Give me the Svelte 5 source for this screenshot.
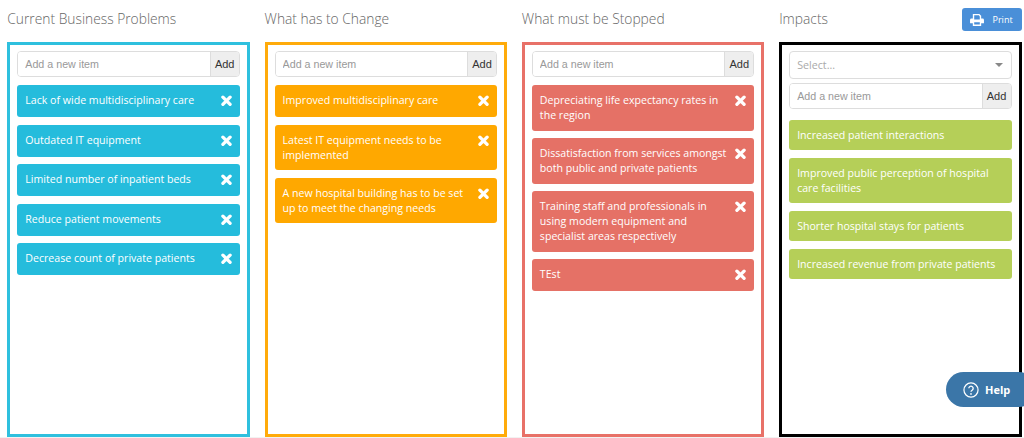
<script>
	const columns = [
		{
			title: 'Current Business Problems',
			tone: 'blue',
			items: [
				'Lack of wide multidisciplinary care',
				'Outdated IT equipment',
				'Limited number of inpatient beds',
				'Reduce patient movements',
				'Decrease count of private patients'
			]
		},
		{
			title: 'What has to Change',
			tone: 'orange',
			items: [
				'Improved multidisciplinary care',
				'Latest IT equipment needs to be implemented',
				'A new hospital building has to be set up to meet the changing needs'
			]
		},
		{
			title: 'What must be Stopped',
			tone: 'red',
			items: [
				'Depreciating life expectancy rates in the region',
				'Dissatisfaction from services amongst both public and private patients',
				'Training staff and professionals in using modern equipment and specialist areas respectively',
				'TEst'
			]
		},
		{
			title: 'Impacts',
			tone: 'green',
			select: true,
			print: true,
			items: [
				'Increased patient interactions',
				'Improved public perception of hospital care facilities',
				'Shorter hospital stays for patients',
				'Increased revenue from private patients'
			]
		}
	];
</script>

<div class="board">
	{#each columns as col}
		<section class="column {col.tone}">
			<header>
				<h2>{col.title}</h2>
				{#if col.print}
					<button class="print">
						<svg width="14" height="13" viewBox="0 0 15 14">
							<path fill="#fff" d="M3 1h7l2 2v3h1.500A1.500 1.500 0 0 1 15 7.500V11h-3v3H3v-3H0V7.500A1.500 1.500 0 0 1 1.500 6H3zM4.500 2.500V7h6V3.800L9.500 2.500zM4.500 10v2.500h6V10z"/>
						</svg>
						Print
					</button>
				{/if}
			</header>
			<div class="box">
				{#if col.select}
					<div class="select">
						<span>Select...</span>
						<i class="caret"></i>
					</div>
				{/if}
				<div class="add">
					<input type="text" placeholder="Add a new item" />
					<button>Add</button>
				</div>
				<ul>
					{#each col.items as item}
						<li>
							<span>{item}</span>
							{#if col.tone !== 'green'}
								<svg class="x" width="11" height="16.500" viewBox="0 -2.250 11 16.500">
									<path d="M1.900 1.900 L9.100 9.100 M9.100 1.900 L1.900 9.100" stroke="#fff" stroke-width="3.300" stroke-linecap="round"/>
								</svg>
							{/if}
						</li>
					{/each}
				</ul>
			</div>
		</section>
	{/each}
</div>

<button class="help">
	<svg width="16" height="16" viewBox="0 0 17 17">
		<circle cx="8.500" cy="8.500" r="7.500" fill="none" stroke="#fff" stroke-width="1.300"/>
		<path d="M6.200 6.700a2.300 2.300 0 1 1 3.500 2c-.8.500-1.200.9-1.200 1.700" fill="none" stroke="#fff" stroke-width="1.400"/>
		<circle cx="8.500" cy="12.700" r=".9" fill="#fff"/>
	</svg>
	Help
</button>

<style>
	:global(body) {
		background: #fff;
		font-family: 'Open Sans', sans-serif;
		overflow: hidden;
	}

	.board {
		display: grid;
		grid-template-columns: repeat(4, 242.400px);
		column-gap: 14.900px;
		padding: 0 0 0 7.300px;
		height: 438px;
		box-sizing: border-box;
		border-bottom: 1px solid #f2f2f2;
	}

	header {
		display: flex;
		justify-content: space-between;
		align-items: center;
		height: 42px;
		padding-bottom: 6px;
		box-sizing: border-box;
	}

	h2 {
		margin: 0;
		font-size: 13.800px;
		font-weight: 300;
		color: #666;
	}

	.print {
		display: flex;
		align-items: center;
		gap: 9px;
		height: 23px;
		width: 60px;
		margin-top: 2px;
		padding: 0 0 0 8px;
		border: none;
		border-radius: 3px;
		background: #4a8fd8;
		color: #fff;
		font: 9px 'Open Sans', sans-serif;
	}

	.box {
		height: 394.500px;
		box-sizing: border-box;
		border: 3px solid;
		padding: 6px 7px;
	}

	.blue .box { border-color: #2fc0de; }
	.orange .box { border-color: #ffab0a; }
	.red .box { border-color: #e87168; }
	.green .box { border-color: #000; }

	.blue li { background: #25bcdc; }
	.orange li { background: #ffa800; }
	.red li { background: #e57166; }
	.green li { background: #b5cf58; }

	.select {
		display: flex;
		justify-content: space-between;
		align-items: center;
		height: 28px;
		margin-bottom: 4px;
		padding: 0 8px 0 7px;
		border: 1px solid #ddd;
		border-radius: 4px;
		box-sizing: border-box;
		color: #aaa;
		font-size: 10.700px;
	}

	.caret {
		border: 4px solid transparent;
		border-top: 4px solid #888;
		border-bottom: 0;
	}

	.add {
		display: flex;
		height: 26px;
		margin-bottom: 8px;
		border: 1px solid #ddd;
		border-radius: 4px;
		box-sizing: border-box;
		overflow: hidden;
	}

	.green .add {
		height: 25.500px;
		margin-bottom: 11px;
	}

	.add input {
		flex: 1;
		min-width: 0;
		border: none;
		outline: none;
		padding: 0 7px;
		font: 10.700px 'Liberation Sans', sans-serif;
	}

	.add input::placeholder {
		color: #999;
	}

	.add button {
		width: 29px;
		padding: 0;
		border: none;
		border-left: 1px solid #ddd;
		background: #eee;
		color: #333;
		font: 11px 'Liberation Sans', sans-serif;
	}

	ul {
		list-style: none;
		margin: 0;
		padding: 0;
		display: flex;
		flex-direction: column;
		gap: 7.500px;
	}

	li {
		display: flex;
		justify-content: space-between;
		align-items: flex-start;
		gap: 3px;
		padding: 8.250px 8px 7.250px;
		border-radius: 3px;
		color: #fff;
		font-size: 10.600px;
		line-height: 15px;
	}

	.x {
		flex: none;
	}

	.help {
		position: absolute;
		left: 946px;
		top: 372px;
		width: 90px;
		height: 35px;
		display: flex;
		align-items: center;
		gap: 6px;
		padding: 0 0 0 17px;
		border: none;
		border-radius: 18px;
		background: #3b76a8;
		color: #fff;
		font: 700 11px 'Open Sans', sans-serif;
	}
</style>
